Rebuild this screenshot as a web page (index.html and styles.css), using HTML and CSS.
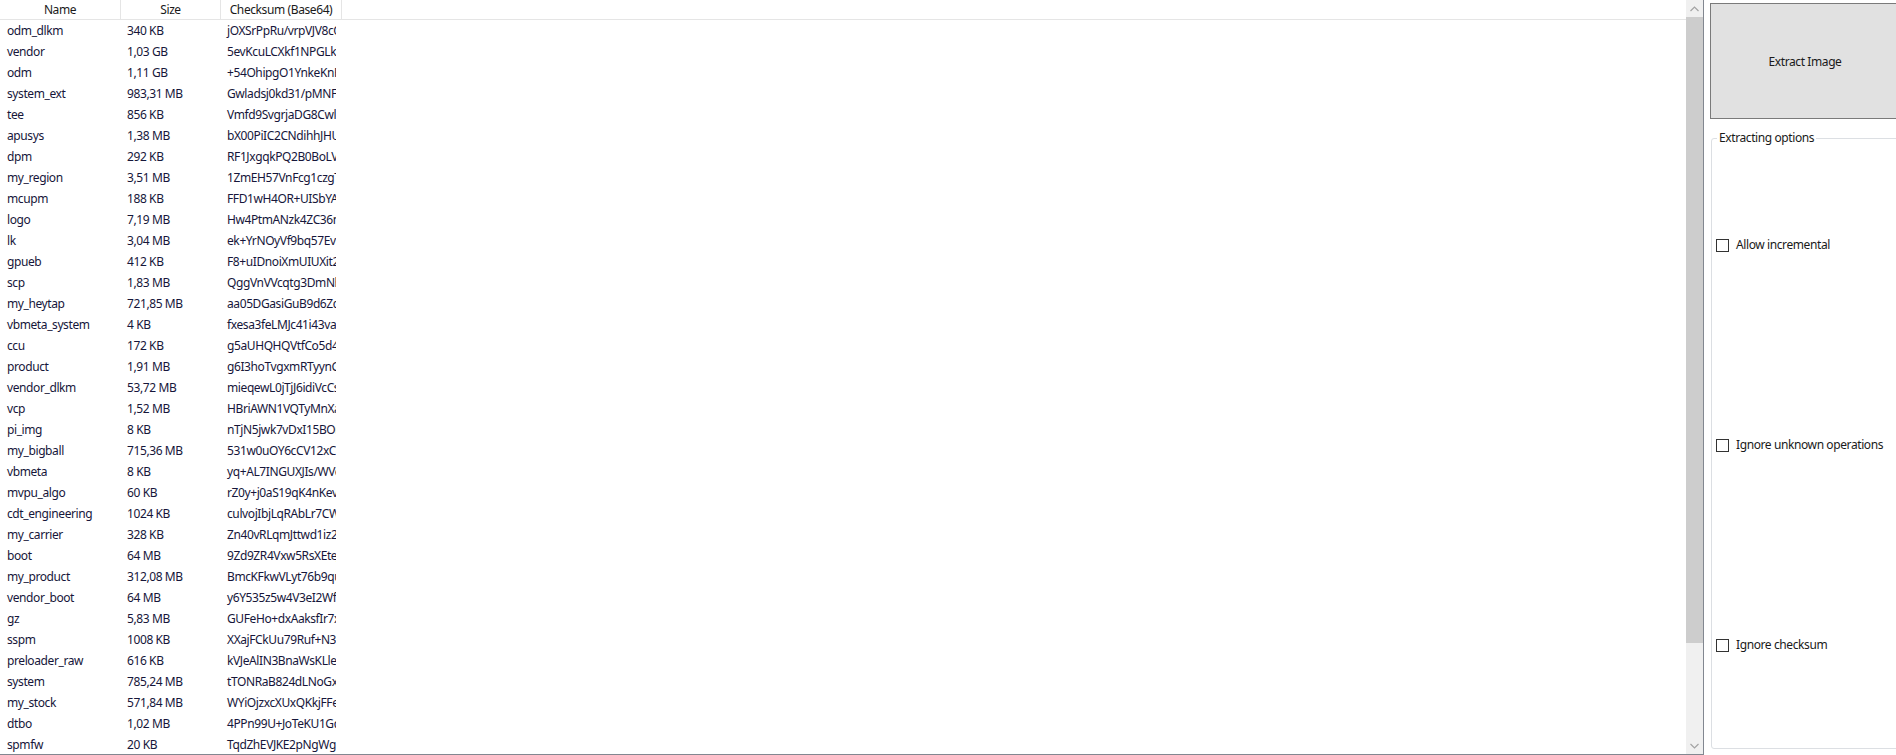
FILE: index.html
```html
<!DOCTYPE html>
<html>
<head>
<meta charset="utf-8">
<title>Payload Extractor</title>
<link rel="stylesheet" href="styles.css">
</head>
<body>
<div class="app">
  <div class="list">
    <div class="list-main">
      <div class="header">
        <div class="hcell">Name</div>
        <div class="hcell">Size</div>
        <div class="hcell">Checksum (Base64)</div>
      </div>
      <div class="rows">
        <div class="row"><span>odm_dlkm</span><span>340 KB</span><span>jOXSrPpRu/vrpVJV8cQ2</span></div>
        <div class="row"><span>vendor</span><span>1,03 GB</span><span>5evKcuLCXkf1NPGLkW8</span></div>
        <div class="row"><span>odm</span><span>1,11 GB</span><span>+54OhipgO1YnkeKnR3d</span></div>
        <div class="row"><span>system_ext</span><span>983,31 MB</span><span>Gwladsj0kd31/pMNFq2</span></div>
        <div class="row"><span>tee</span><span>856 KB</span><span>Vmfd9SvgrjaDG8CwlKp</span></div>
        <div class="row"><span>apusys</span><span>1,38 MB</span><span>bX00PiIC2CNdihhJHUe</span></div>
        <div class="row"><span>dpm</span><span>292 KB</span><span>RF1JxgqkPQ2B0BoLVx4</span></div>
        <div class="row"><span>my_region</span><span>3,51 MB</span><span>1ZmEH57VnFcg1czgT0a</span></div>
        <div class="row"><span>mcupm</span><span>188 KB</span><span>FFD1wH4OR+UISbYAq9</span></div>
        <div class="row"><span>logo</span><span>7,19 MB</span><span>Hw4PtmANzk4ZC36nLd</span></div>
        <div class="row"><span>lk</span><span>3,04 MB</span><span>ek+YrNOyVf9bq57EvQ</span></div>
        <div class="row"><span>gpueb</span><span>412 KB</span><span>F8+uIDnoiXmUIUXit2k</span></div>
        <div class="row"><span>scp</span><span>1,83 MB</span><span>QggVnVVcqtg3DmNh7</span></div>
        <div class="row"><span>my_heytap</span><span>721,85 MB</span><span>aa05DGasiGuB9d6ZcP</span></div>
        <div class="row"><span>vbmeta_system</span><span>4 KB</span><span>fxesa3feLMJc41i43vaU</span></div>
        <div class="row"><span>ccu</span><span>172 KB</span><span>g5aUHQHQVtfCo5d4Yw</span></div>
        <div class="row"><span>product</span><span>1,91 MB</span><span>g6I3hoTvgxmRTyynGe</span></div>
        <div class="row"><span>vendor_dlkm</span><span>53,72 MB</span><span>mieqewL0jTjJ6idiVcCs</span></div>
        <div class="row"><span>vcp</span><span>1,52 MB</span><span>HBriAWN1VQTyMnXa</span></div>
        <div class="row"><span>pi_img</span><span>8 KB</span><span>nTjN5jwk7vDxI15BOr</span></div>
        <div class="row"><span>my_bigball</span><span>715,36 MB</span><span>531w0uOY6cCV12xCm</span></div>
        <div class="row"><span>vbmeta</span><span>8 KB</span><span>yq+AL7INGUXJIs/WVe</span></div>
        <div class="row"><span>mvpu_algo</span><span>60 KB</span><span>rZ0y+j0aS19qK4nKev</span></div>
        <div class="row"><span>cdt_engineering</span><span>1024 KB</span><span>culvojIbjLqRAbLr7CWd</span></div>
        <div class="row"><span>my_carrier</span><span>328 KB</span><span>Zn40vRLqmJttwd1iz2o</span></div>
        <div class="row"><span>boot</span><span>64 MB</span><span>9Zd9ZR4Vxw5RsXEteJ</span></div>
        <div class="row"><span>my_product</span><span>312,08 MB</span><span>BmcKFkwVLyt76b9qu</span></div>
        <div class="row"><span>vendor_boot</span><span>64 MB</span><span>y6Y535z5w4V3eI2Wf</span></div>
        <div class="row"><span>gz</span><span>5,83 MB</span><span>GUFeHo+dxAaksfIr7x</span></div>
        <div class="row"><span>sspm</span><span>1008 KB</span><span>XXajFCkUu79Ruf+N3b</span></div>
        <div class="row"><span>preloader_raw</span><span>616 KB</span><span>kVJeAlIN3BnaWsKLleu</span></div>
        <div class="row"><span>system</span><span>785,24 MB</span><span>tTONRaB824dLNoGxy</span></div>
        <div class="row"><span>my_stock</span><span>571,84 MB</span><span>WYiOjzxcXUxQKkjFFe</span></div>
        <div class="row"><span>dtbo</span><span>1,02 MB</span><span>4PPn99U+JoTeKU1Gq</span></div>
        <div class="row"><span>spmfw</span><span>20 KB</span><span>TqdZhEVJKE2pNgWgs</span></div>
      </div>
    </div>
    <div class="scrollbar">
      <div class="sb-btn">
        <svg width="9" height="6" viewBox="0 0 9 6"><path d="M0.5 5 L4.5 1 L8.5 5" fill="none" stroke="#a3a3a3" stroke-width="1.2"/></svg>
      </div>
      <div class="sb-thumb"></div>
      <div class="sb-track"></div>
      <div class="sb-btn">
        <svg width="9" height="6" viewBox="0 0 9 6"><path d="M0.5 1 L4.5 5 L8.5 1" fill="none" stroke="#a3a3a3" stroke-width="1.2"/></svg>
      </div>
    </div>
  </div>
  <div class="side">
    <button class="extract">Extract Image</button>
    <fieldset class="options">
      <legend>Extracting options</legend>
      <div class="checks">
        <label class="check"><span class="box"></span>Allow incremental</label>
        <label class="check"><span class="box"></span>Ignore unknown operations</label>
        <label class="check"><span class="box"></span>Ignore checksum</label>
      </div>
    </fieldset>
  </div>
</div>
</body>
</html>
```

FILE: styles.css
```css
html, body {
  margin: 0;
  padding: 0;
  background: #ffffff;
}

body {
  font-family: "Noto Sans", "Open Sans", sans-serif;
  font-size: 12px;
  letter-spacing: -0.4px;
  color: #000;
  overflow: hidden;
}

.app {
  display: flex;
  width: 1896px;
  height: 755px;
  overflow: hidden;
}

.list {
  width: 1704px;
  height: 755px;
  box-sizing: border-box;
  border-right: 1px solid #828790;
  border-bottom: 1px solid #828790;
  display: flex;
  flex-shrink: 0;
  overflow: hidden;
}

.list-main {
  flex: 1;
  overflow: hidden;
}

.header {
  display: flex;
  height: 20px;
  box-sizing: border-box;
  border-bottom: 1px solid #e5e5e5;
}

.hcell {
  box-sizing: border-box;
  border-right: 1px solid #e5e5e5;
  text-align: center;
  line-height: 19px;
  color: #1a1a1a;
  white-space: nowrap;
  overflow: hidden;
}

.hcell:nth-child(1) { width: 121px; }
.hcell:nth-child(2) { width: 100px; }
.hcell:nth-child(3) { width: 121px; }

.row {
  display: grid;
  grid-template-columns: 121px 100px 115px;
  height: 21px;
  line-height: 21px;
  color: #16163a;
}

.row span {
  padding-left: 7px;
  white-space: nowrap;
  overflow: hidden;
}

.row span:nth-child(2) { padding-left: 6px; }
.row span:nth-child(3) { padding-left: 6px; }

.scrollbar {
  width: 17px;
  flex-shrink: 0;
  display: flex;
  flex-direction: column;
  background: #f0f0f0;
}

.sb-btn {
  height: 17px;
  display: flex;
  align-items: center;
  justify-content: center;
  flex-shrink: 0;
}

.sb-thumb {
  height: 626px;
  background: #cdcdcd;
  flex-shrink: 0;
}

.sb-track {
  flex: 1;
}

.side {
  width: 192px;
  flex-shrink: 0;
  overflow: hidden;
  display: flex;
  flex-direction: column;
  align-items: flex-start;
}

.extract {
  margin: 3px 0 0 6px;
  width: 190px;
  height: 116px;
  flex-shrink: 0;
  box-sizing: border-box;
  background: #e1e1e1;
  border: 1px solid #7a7a7a;
  border-radius: 0;
  font-family: "Noto Sans", "Open Sans", sans-serif;
  font-size: 12px;
  letter-spacing: -0.4px;
  color: #1a1a1a;
  padding: 0;
}

.options {
  margin: 11px 0 0 7px;
  padding: 0;
  width: 195px;
  height: 619px;
  box-sizing: border-box;
  flex-shrink: 0;
  border: 1px solid #dcdfe3;
  border-radius: 3px;
}

.options legend {
  margin-left: 5px;
  padding: 0 2px;
  line-height: 16px;
  color: #1a1a1a;
}

.checks {
  display: flex;
  flex-direction: column;
  gap: 184px;
  padding: 91px 0 0 4px;
}

.check {
  display: flex;
  align-items: center;
  height: 16px;
  line-height: 16px;
  color: #1a1a1a;
  white-space: nowrap;
}

.box {
  width: 13px;
  height: 13px;
  box-sizing: border-box;
  border: 1px solid #333333;
  background: #fff;
  margin-right: 7px;
  flex-shrink: 0;
}
```
